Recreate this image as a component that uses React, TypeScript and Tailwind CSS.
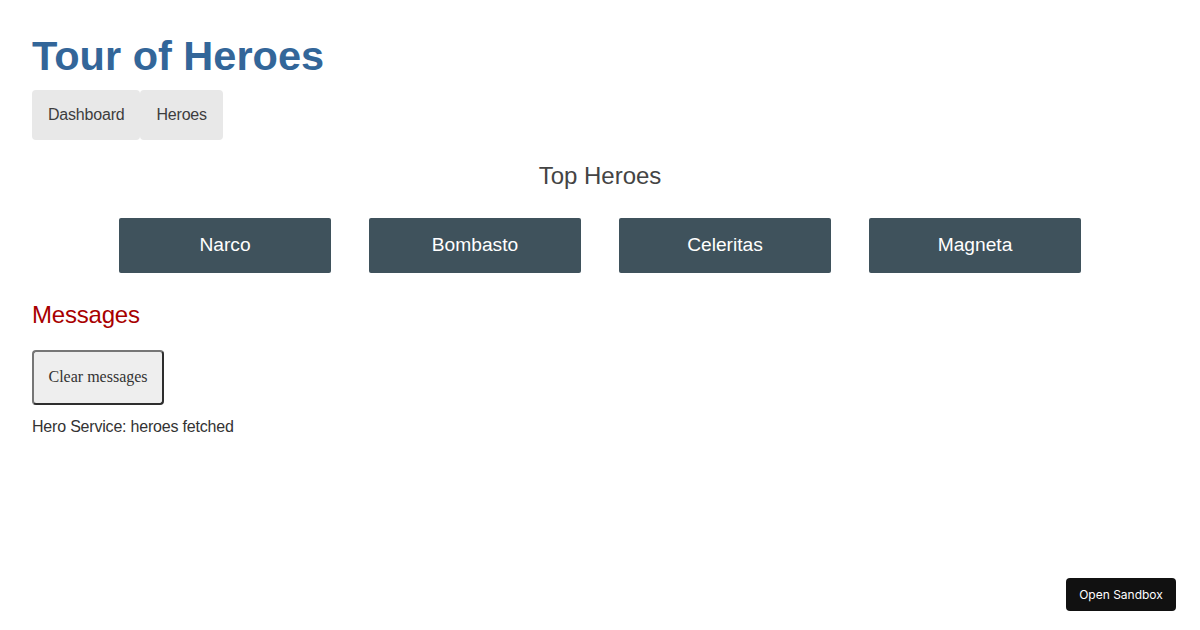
export default function App() {
  const heroes = ["Narco", "Bombasto", "Celeritas", "Magneta"];
  return (
    <div className="min-h-[630px] bg-white px-8 pt-8 font-['Liberation_Sans',Arial,sans-serif] text-[#333]">
      <h1 className="text-[41.5px] font-bold leading-[47px] text-[#336699]">Tour of Heroes</h1>
      <nav className="mt-[11px] flex">
        <a className="rounded-[4px] bg-[#e8e8e8] p-4 text-[16px] leading-[18px] tracking-[-0.2px] text-[#3d3d3d]">Dashboard</a>
        <a className="rounded-[4px] bg-[#e8e8e8] p-4 text-[16px] leading-[18px] tracking-[-0.2px] text-[#3d3d3d]">Heroes</a>
      </nav>
      <h2 className="mt-[22px] text-center text-[24px] leading-[28px] text-[#444]">Top Heroes</h2>
      <div className="mx-auto mt-[28px] flex max-w-[1000px] justify-around">
        {heroes.map((h) => (
          <a
            key={h}
            className="w-[212px] rounded-[2px] bg-[#3f525c] p-4 text-center text-[19.2px] leading-[22.5px] text-white"
          >
            {h}
          </a>
        ))}
      </div>
      <h2 className="mt-[28.5px] text-[24px] leading-[28px] tracking-[-0.2px] text-[#a80000]">Messages</h2>
      <button className="mt-[21px] block rounded-[4px] border-2 border-t-[#767676] border-l-[#767676] border-b-[#2e2e2e] border-r-[#2e2e2e] bg-[#eeeeee] px-[14.5px] py-4 font-['Liberation_Serif','Times_New_Roman',serif] text-[16px] leading-[18.5px] text-[#333]">
        Clear messages
      </button>
      <div className="mt-[13px] text-[16px] leading-[18px] tracking-[-0.2px] text-[#333]">Hero Service: heroes fetched</div>
      <div className="fixed bottom-[19px] right-[24px] flex h-[33px] w-[110px] items-center justify-center rounded-[4px] bg-[#111111] font-['Inter',sans-serif] text-[12px] text-white">
        Open Sandbox
      </div>
    </div>
  );
}
